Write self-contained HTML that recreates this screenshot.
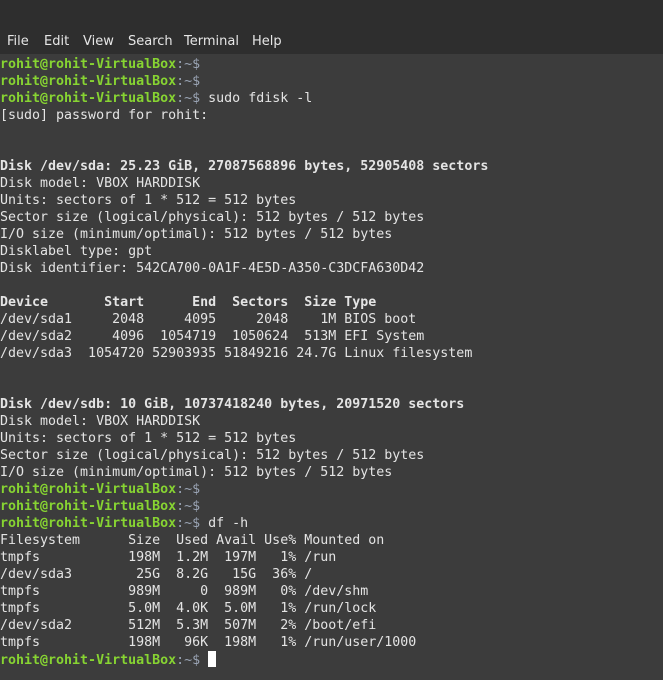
<!DOCTYPE html>
<html><head><meta charset="utf-8"><style>
html,body{margin:0;padding:0;width:663px;height:680px;overflow:hidden;background:#3c3c3c;}
#title{position:absolute;left:0;top:0;width:663px;height:28px;background:#2e2e2e;}
#menu{position:absolute;left:0;top:28px;width:663px;height:26px;background:#2e2e2e;font-family:"DejaVu Sans","Liberation Sans",sans-serif;font-size:13px;color:#e6e6e6;}
#menu span{position:absolute;top:6px;}
#term{position:absolute;left:0;top:54px;width:663px;height:626px;background:#3c3c3c;}
pre{margin:0;padding-top:2px;font-family:"DejaVu Sans Mono","Liberation Mono",monospace;font-size:13.3px;line-height:17px;color:#e4e4e4;white-space:pre;}
.g{color:#87d432;font-weight:bold;}
.b{color:#9aa4b4;}
.bo{font-weight:bold;}
.cur{display:inline-block;width:8px;height:16px;background:#fff;vertical-align:-3px;}
</style></head><body>
<div id="title"></div>
<div id="menu"><span style="left:7px">File</span><span style="left:44px">Edit</span><span style="left:83px">View</span><span style="left:128px">Search</span><span style="left:184px">Terminal</span><span style="left:252px">Help</span></div>
<div id="term"><pre><span class="g">rohit@rohit-VirtualBox</span><span class="b">:~$</span>
<span class="g">rohit@rohit-VirtualBox</span><span class="b">:~$</span>
<span class="g">rohit@rohit-VirtualBox</span><span class="b">:~$</span> sudo fdisk -l
[sudo] password for rohit: 


<span class="bo">Disk /dev/sda: 25.23 GiB, 27087568896 bytes, 52905408 sectors</span>
Disk model: VBOX HARDDISK   
Units: sectors of 1 * 512 = 512 bytes
Sector size (logical/physical): 512 bytes / 512 bytes
I/O size (minimum/optimal): 512 bytes / 512 bytes
Disklabel type: gpt
Disk identifier: 542CA700-0A1F-4E5D-A350-C3DCFA630D42

<span class="bo">Device       Start      End  Sectors  Size Type</span>
/dev/sda1     2048     4095     2048    1M BIOS boot
/dev/sda2     4096  1054719  1050624  513M EFI System
/dev/sda3  1054720 52903935 51849216 24.7G Linux filesystem


<span class="bo">Disk /dev/sdb: 10 GiB, 10737418240 bytes, 20971520 sectors</span>
Disk model: VBOX HARDDISK   
Units: sectors of 1 * 512 = 512 bytes
Sector size (logical/physical): 512 bytes / 512 bytes
I/O size (minimum/optimal): 512 bytes / 512 bytes
<span class="g">rohit@rohit-VirtualBox</span><span class="b">:~$</span>
<span class="g">rohit@rohit-VirtualBox</span><span class="b">:~$</span>
<span class="g">rohit@rohit-VirtualBox</span><span class="b">:~$</span> df -h
Filesystem      Size  Used Avail Use% Mounted on
tmpfs           198M  1.2M  197M   1% /run
/dev/sda3        25G  8.2G   15G  36% /
tmpfs           989M     0  989M   0% /dev/shm
tmpfs           5.0M  4.0K  5.0M   1% /run/lock
/dev/sda2       512M  5.3M  507M   2% /boot/efi
tmpfs           198M   96K  198M   1% /run/user/1000
<span class="g">rohit@rohit-VirtualBox</span><span class="b">:~$</span> <span class="cur"></span></pre></div>
</body></html>
